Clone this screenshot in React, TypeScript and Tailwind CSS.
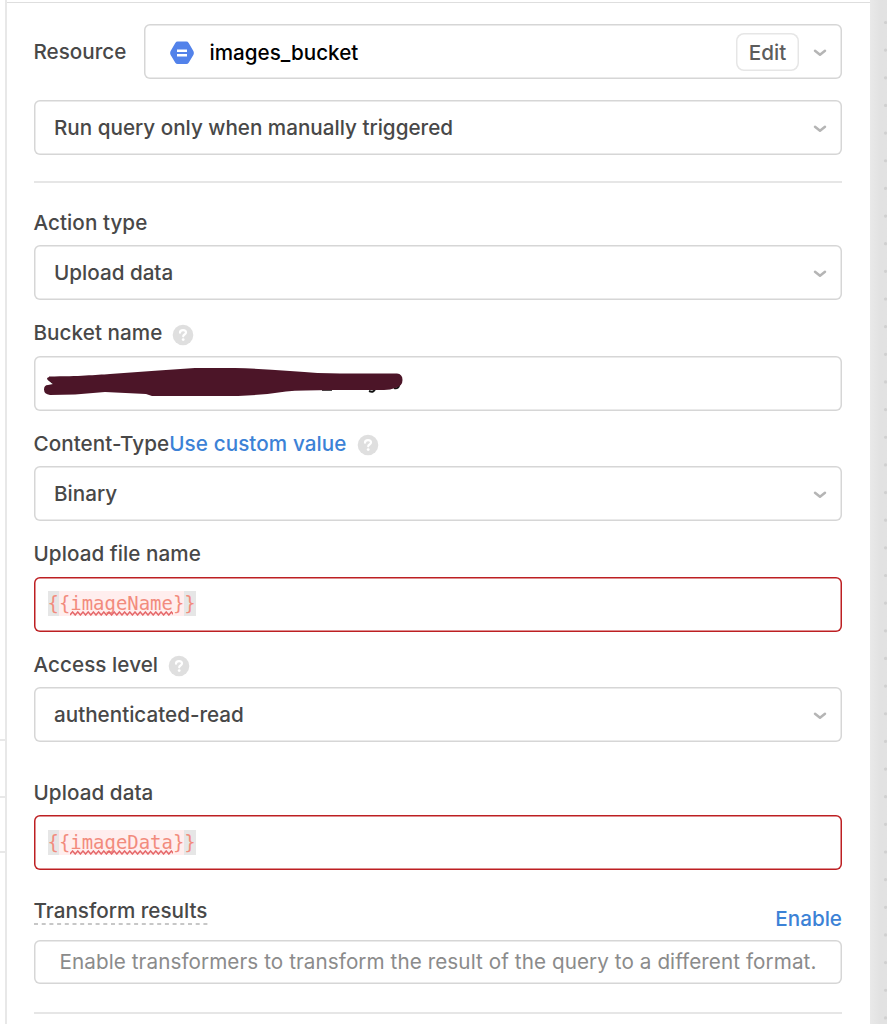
import type { ReactNode } from "react";

const dots = Array.from({ length: 37 }, (_, i) => 22.5 + i * 27.65);

function Chevron() {
  return (
    <svg width="14" height="10" viewBox="0 0 14 10" className="mt-[3px] shrink-0" fill="none">
      <path
        d="M2 2.7 7 6.800l5-4.100"
        stroke="#b5b5b5"
        strokeWidth="2.5"
        strokeLinecap="round"
        strokeLinejoin="round"
      />
    </svg>
  );
}

function Help() {
  return (
    <svg width="22" height="22" viewBox="0 0 22 22" className="mt-[3px] ml-2.5" fill="none">
      <circle cx="11" cy="11" r="10.3" fill="#dfdfdf" />
      <path
        d="M8 8.700c0-1.600 1.300-2.600 3-2.600s3 1 3 2.400c0 2-2.800 2-2.800 3.800"
        stroke="#fff"
        strokeWidth="2.2"
        strokeLinecap="round"
      />
      <circle cx="11.2" cy="15.6" r="1.4" fill="#fff" />
    </svg>
  );
}

function Select({ value }: { value: string }) {
  return (
    <div className="flex h-[55px] items-center justify-between rounded-md pr-[15px] pl-[20.5px] shadow-[inset_0_0_0_1.5px_#d6d6d6]">
      <span>{value}</span>
      <Chevron />
    </div>
  );
}

function CodeInput({ value }: { value: string }) {
  return (
    <div className="flex h-[55px] items-center rounded-md pl-3.5 shadow-[inset_0_0_0_1.5px_#bd1f22]">
      <div className="-mt-px flex h-[25px] bg-[#ffeeee] font-['DejaVu_Sans_Mono',monospace] text-[18.95px] leading-[25px] tracking-normal text-[#f28b7d]">
        <span className="bg-[#e6e6e6]">{"{"}</span>
        <span>{"{"}</span>
        <span className="relative">
          {value}
          <svg className="absolute top-5 left-0 h-[5px] w-full" fill="none">
            <path
              d={"M0 4" + "l2.6-3 2.6 3".repeat(20)}
              stroke="#e5686a"
              strokeWidth="1.5"
            />
          </svg>
        </span>
        <span>{"}"}</span>
        <span className="bg-[#e6e6e6]">{"}"}</span>
      </div>
    </div>
  );
}

type FieldProps = {
  label: string;
  link?: string;
  help?: boolean;
  children: ReactNode;
};

function Field({ label, link, help, children }: FieldProps) {
  return (
    <div>
      <div className="flex h-[55.5px] items-center pt-[11px]">
        <span className="tracking-[0.06px]">{label}</span>
        {link && <a className="tracking-[0.1px] text-[#3c82d6]">{link}</a>}
        {help && <Help />}
      </div>
      {children}
    </div>
  );
}

function Redacted() {
  return (
    <div className="h-[55px] rounded-md pt-2 pl-2 shadow-[inset_0_0_0_1.5px_#d6d6d6]">
      <svg width="364" height="40" viewBox="42 364 364 40">
        <path
          d="M322 389.8h10M369 391q5 2 6-2M394 388q5 1 5-3M49 379l4 4"
          stroke="#111"
          strokeWidth="2"
          fill="none"
        />
        <path
          d="M49 376.500C80 376.300 95 375 110 374L155 370.800 195 368h40Q260 368.500 290 371T340 373.500h57q5.500.5 5.500 6.500t-6.500 7.700q-6 2.300-12 2.300h-52q-30 0-46 1.500-22 3.500-48 4.500h-86l-6-2-41-2-30 2.500-25 .5q-6-1-6-5.500t4-4.500l5-1-4-3q-4-3 0-4z"
          fill="#4c1528"
        />
      </svg>
    </div>
  );
}

export default function App() {
  return (
    <div className="flex h-[1024px] w-[887px] overflow-hidden bg-white font-[Inter,sans-serif] text-[20.65px] leading-[26px] font-medium text-[#484848]">
      <div className="flex w-[5px] flex-col pt-[739px]">
        <div className="h-[57px] border-t-2 border-[#e8e8e8]" />
        <div className="h-[57px] border-y-2 border-[#e8e8e8]" />
      </div>

      <main className="h-full w-[865px] border-l-2 border-[#e8e8e8]">
        <div className="h-[3px] border-b border-[#dedede]" />
        <div className="pt-[21px] pr-7 pl-[26.5px]">
          <div className="flex items-center">
            <span className="w-[110.5px]">Resource</span>
            <div className="flex h-[55px] flex-1 items-center rounded-md pr-[15px] pl-[25px] shadow-[inset_0_0_0_1.5px_#d6d6d6]">
              <svg width="26" height="26" viewBox="0 0 26 26" className="mt-0.5">
                <path
                  d="M8.700 1.600h8.600q1.600 0 2.400 1.300l4.800 8.400q.8 1.700 0 3.400l-4.800 8.100q-.8 1.300-2.400 1.300H8.700q-1.600 0-2.400-1.300l-4.800-8.100q-.8-1.700 0-3.400l4.800-8.400q.8-1.300 2.400-1.300z"
                  fill="#5282ea"
                />
                <path d="M8 10.700h10M8 15.200h10" stroke="#fff" strokeWidth="2.4" />
              </svg>
              <span className="mt-[3px] ml-3.5 flex-1 pl-[0.5px] text-black">images_bucket</span>
              <button className="mr-3.5 h-[38px] w-[63px] rounded-lg pt-0.5 text-[#5c5c5c] shadow-[inset_0_0_0_1.5px_#e6e6e6]">
                Edit
              </button>
              <Chevron />
            </div>
          </div>

          <div className="mt-[21px]">
            <Select value="Run query only when manually triggered" />
          </div>
          <hr className="mt-[26px] border-t-2 border-[#e6e6e6]" />

          <div className="mt-[6.5px]">
            <Field label="Action type">
              <Select value="Upload data" />
            </Field>
            <Field label="Bucket name" help>
              <Redacted />
            </Field>
            <Field label="Content-Type" link="Use custom value" help>
              <Select value="Binary" />
            </Field>
            <Field label="Upload file name">
              <CodeInput value="imageName" />
            </Field>
            <Field label="Access level" help>
              <Select value="authenticated-read" />
            </Field>
            <div className="mt-[17.5px]">
              <Field label="Upload data">
                <CodeInput value="imageData" />
              </Field>
            </div>
          </div>

          <div className="mt-[28px] flex h-[41.5px] justify-between">
            <div>
              <div>Transform results</div>
              <svg width="174" height="2" className="-mt-px block">
                <path d="M0 1h174" stroke="#b5b5b5" strokeWidth="1.5" strokeDasharray="4 3.7" />
              </svg>
            </div>
            <a className="mt-[7.5px] text-[#3c82d6]">Enable</a>
          </div>
          <div className="flex h-[44px] items-center rounded-md pl-[26px] font-normal tracking-[0.085px] text-[#8b8b8b] shadow-[inset_0_0_0_1.5px_#d6d6d6]">
            <span className="whitespace-nowrap">
              Enable transformers to transform the result of the query to a different format.
            </span>
          </div>
          <hr className="mt-7 border-t-2 border-[#e6e6e6]" />
        </div>
      </main>

      {/* canvas edge behind the panel */}
      <div className="h-full w-[17px] bg-linear-to-r from-[#e9e9e9] to-[#e2e2e2] to-60%">
        <svg width="17" height="1024" className="block">
          {dots.map((y) => (
            <circle key={y} cx="15.5" cy={y} r="1.6" fill="#d0d0d0" />
          ))}
        </svg>
      </div>
    </div>
  );
}
